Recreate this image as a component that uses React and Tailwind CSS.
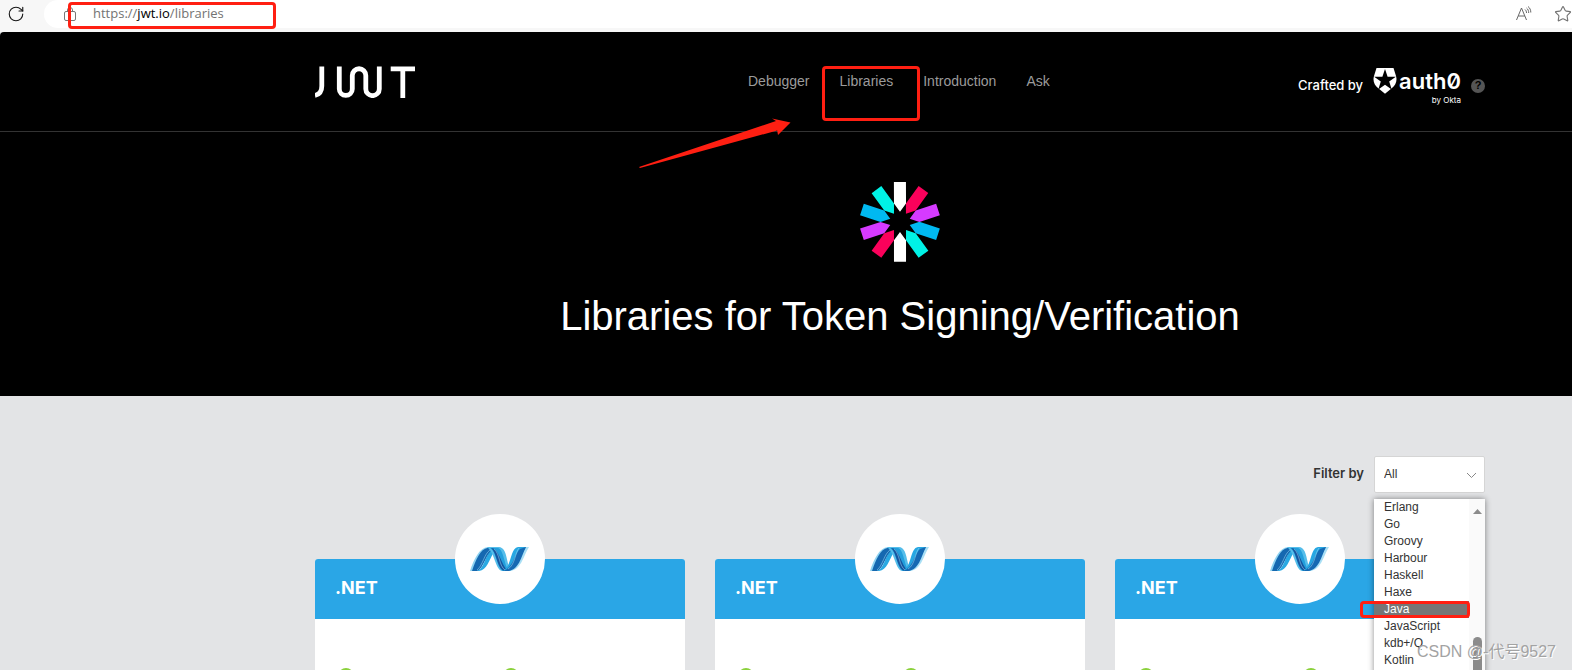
import { useState } from "react"
import { RotateCw, Star } from "lucide-react"
import { clsx } from "clsx"

const NAV_ITEMS = ["Debugger", "Libraries", "Introduction", "Ask"]

const LANGUAGES = [
  "Erlang",
  "Go",
  "Groovy",
  "Harbour",
  "Haskell",
  "Haxe",
  "Java",
  "JavaScript",
  "kdb+/Q",
  "Kotlin",
]

const LIBRARIES = [
  { id: 1, name: ".NET" },
  { id: 2, name: ".NET" },
  { id: 3, name: ".NET" },
]

function Wordmark() {
  return (
    <svg width="100" height="32" viewBox="0 0 100 32" fill="none" stroke="#fff" strokeWidth="4.8" aria-label="JWT">
      <path d="M6.800 .5V20c0 6-2.400 8.500-6.800 9.400" />
      <path d="M24.300 .5V22.900a6.500 6.500 0 0 0 13 0V9.500a6.700 6.700 0 0 1 13.500 0V22.900a6.700 6.700 0 0 0 13.500 0V.5" />
      <path d="M75.700 2.900H100M87.800 2.900V32" />
    </svg>
  )
}

function TokenMark() {
  return (
    <svg width="80" height="80" viewBox="-.3 0 101 101" aria-hidden="true">
      <path fill="#fff" d="M57.800 27.200L57.700 0H42.500l.1 27.200 7.600 10.400zM42.600 73.600v27.200h15.200V73.600l-7.600-10.400z" />
      <path fill="#00f2e6" d="M57.800 73.600l15.900 22L86 86.700 70 64.700l-12.200-4zM42.600 27.200L26.600 5.200 14.400 14.100l15.900 22 12.300 4z" />
      <path fill="#00b9f1" d="M30.300 36L4.500 27.600-.2 42l25.800 8.400 12.300-4zM62.500 54.300l7.500 10.400 25.800 8.400 4.700-14.400-25.800-8.400z" />
      <path fill="#d63aff" d="M74.700 50.400l25.800-8.400-4.700-14.400L70 36l-7.500 10.400zM25.600 50.400L-.2 58.800l4.700 14.400L30.300 64.700l7.600-10.400z" />
      <path fill="#fb015b" d="M30.300 64.700l-15.900 22 12.200 8.900 16-22v-12.900zM70 36l15.900-22-12.200-8.900-16 22v12.900z" />
    </svg>
  )
}

function Auth0Shield() {
  return (
    <svg width="24" height="26" viewBox="0 0 24 26" aria-hidden="true">
      <path fill="#fff" d="M3.500 0h17L23 8c1.500 5-.5 9.500-4 12l-7 5.700L5 20C1.500 17.500-.5 13 1 8z" />
      <path fill="#000" d="M12 1l2.600 7.800h8.200l-6.600 4.800 2.500 7.900L12 16.700l-6.700 4.800 2.500-7.900-6.600-4.800h8.200z" />
    </svg>
  )
}

function DotNetLogo() {
  return (
    <svg width="60" height="24" viewBox="0 0 60 24" aria-hidden="true">
      <path fill="#8fd3f1" d="M0 24C4 12 9 1 18 0h4C14 5 16 21 6 24z" />
      <path fill="#29a9e2" d="M6 24c8-1 9-15 15-21l3 2C19 13 17 23 9 24z" />
      <path fill="#1568b0" d="M2 24C6 13 10 2 18 .8l5 1.200C15 8 14 21 7 24z" />
      <path fill="#55bdea" d="M17 0h12c9 1 7 17 12 24H32C25 22 25 6 17 0z" />
      <path fill="#239fdc" d="M20 1h8c6 2 6 17 11 23h-6C26 20 27 5 20 1z" />
      <path fill="#15559f" d="M21 1c7 0 10 14 15 21l2 2h-4C27 21 27 6 21 1z" />
      <path fill="#a9dff5" d="M54 0h5C53 10 51 23 40 24h-4C46 20 48 8 54 0z" />
      <path fill="#27a7e2" d="M48 0h8C50 9 48 23 37 24h-4C42 19 40 1 48 0z" />
      <path fill="#1669b3" d="M50 2l6-2C51 10 49 23 38 24h-5C43 21 44 8 50 2z" />
      <path fill="none" stroke="#a4def5" strokeWidth=".5" d="M7 23C13 18 14 7 20 3M24 2c6 5 5 17 11 21M38 22C45 18 45 6 49 1" />
    </svg>
  )
}

function BrowserBar() {
  return (
    <div className="flex h-8 shrink-0 items-start bg-[#f7f7f7]">
      <button type="button" aria-label="Refresh" className="flex h-7 w-11 items-center pl-[7px]">
        <RotateCw className="h-[18px] w-[18px] text-neutral-900" strokeWidth={1.5} />
      </button>
      <div className="relative flex h-7 flex-1 items-center rounded-l-full bg-white pl-5">
        <svg width="12" height="14" viewBox="0 0 12 14" fill="none" stroke="#777" aria-hidden="true">
          <rect x=".5" y="4.500" width="11" height="9" rx="1.500" />
          <path d="M3.500 4.500V3a2.500 2.500 0 0 1 5 0v1.500" />
        </svg>
        <a href="#libraries" className="ml-[17px] font-['Open_Sans',sans-serif] text-[13px] text-neutral-500">
          https://<span className="text-black">jwt.io</span>/libraries
        </a>
        <div className="absolute top-0.5 left-6 h-[27px] w-[208px] rounded-sm border-3 border-[#ff1f12]" />
        <div className="ml-auto flex items-center gap-[22px]">
          <button type="button" aria-label="Read aloud" className="h-4 w-4">
            <svg width="16" height="16" viewBox="0 0 16 16" fill="none" stroke="#666" aria-hidden="true">
              <path d="M.5 14L5.500 2l5 12M2.300 10h6.500M9 3.500c1 .8 1.500 2 1.500 3.500M10.500 2c1.600 1.200 2.200 3 2.200 5M12 .5c2 1.500 2.800 3.500 2.800 6" />
            </svg>
          </button>
          <button type="button" aria-label="Favourite">
            <Star className="h-[18px] w-[18px] text-neutral-500" strokeWidth={1.5} />
          </button>
        </div>
      </div>
    </div>
  )
}

function Header() {
  return (
    <header className="relative border-b border-[#333]">
      <div className="mr-[87px] ml-[315px] flex h-[99px] items-center">
        <a href="#home">
          <Wordmark />
        </a>
        <nav className="ml-[333px] flex gap-[30px] pb-0.5 text-sm text-[#9b9b9b]">
          {NAV_ITEMS.map((item) => (
            <a key={item} href={`#${item.toLowerCase()}`} className="relative">
              {item}
              {item === "Libraries" && (
                <span className="absolute -top-[5px] -left-[18px] h-[55px] w-[98px] rounded-sm border-3 border-[#ff1f12]" />
              )}
            </a>
          ))}
        </nav>
        <div className="ml-auto flex items-center pt-2 text-white">
          <span className="font-[Inter,sans-serif] text-[13px] font-medium">Crafted by</span>
          <a href="#auth0" className="ml-2.5 flex flex-col items-end">
            <span className="flex items-center gap-0.5">
              <Auth0Shield />
              <span className="font-[Inter,sans-serif] text-[22px] leading-[28px] font-semibold [font-feature-settings:'zero']">
                auth0
              </span>
            </span>
            <span className="font-[Inter,sans-serif] text-[8px] leading-[10px]">by Okta</span>
          </a>
          <button
            type="button"
            aria-label="Help"
            className="ml-2.5 flex h-3.5 w-3.5 items-center justify-center rounded-full bg-[#555] text-[11px] font-bold text-black"
          >
            ?
          </button>
        </div>
      </div>
      <svg className="absolute top-[86px] left-[638px]" width="154" height="52" viewBox="0 0 154 52" aria-hidden="true">
        <path fill="#ff1f12" d="M1 49L138 3l-4-2.500 18.500 4L140 17l-.8-4.500L2 50z" />
      </svg>
    </header>
  )
}

function LanguageFilter() {
  const [selected, setSelected] = useState("Java")

  return (
    <div className="flex items-center justify-end gap-2.5">
      <label htmlFor="language" className="pb-0.5 font-[Inter,sans-serif] text-[13px] font-semibold text-[#333]">
        Filter by
      </label>
      <div className="relative w-[111px]">
        <select
          id="language"
          className="block h-[37px] w-full appearance-none rounded-xs border border-[#d5d5d5] bg-white px-[9px] pb-0.5 text-xs text-[#333]"
        >
          <option>All</option>
        </select>
        <svg className="pointer-events-none absolute top-4 right-2" width="11" height="7" viewBox="0 0 11 7" fill="none" stroke="#888" aria-hidden="true">
          <path d="M1 1l4.500 4.500L10 1" />
        </svg>

        {/* Open language list */}
        <div className="absolute top-[43px] left-0 z-20 flex h-[400px] w-full bg-white shadow-[0_0_6px_rgba(0,0,0,0.45)]">
          <ul className="flex-1">
            {LANGUAGES.map((language) => (
              <li key={language}>
                <button
                  type="button"
                  onClick={() => setSelected(language)}
                  className={clsx(
                    "block h-[17px] w-full px-2.5 text-left text-xs leading-[17px]",
                    language === selected ? "bg-[#767676] text-white" : "text-[#333]"
                  )}
                >
                  {language}
                </button>
              </li>
            ))}
          </ul>
          <div className="flex w-4 flex-col items-center bg-[#fafafa] pt-2.5">
            <svg width="9" height="5" viewBox="0 0 9 5" fill="#8b8b8b" aria-hidden="true">
              <path d="M4.500 0L9 5H0z" />
            </svg>
            <div className="mt-[123px] w-[9px] flex-1 rounded-full bg-[#8b8b8b]" />
          </div>
          <div className="absolute top-[102px] -left-3.5 h-[17px] w-[110px] rounded-sm border-3 border-[#ff1f12]" />
        </div>
      </div>
    </div>
  )
}

function LibraryCard({ name }) {
  return (
    <article className="relative rounded-t-[3px] bg-white">
      <h2 className="flex h-[60px] items-center rounded-t-[3px] bg-[#2aa6e6] px-5 pb-0.5 font-[Inter,sans-serif] text-lg font-bold text-white">
        {name}
      </h2>
      <div className="absolute -top-[45px] left-1/2 flex h-[90px] w-[90px] -translate-x-1/2 items-center justify-center rounded-full bg-white">
        <DotNetLogo />
      </div>
      <div className="grid h-[200px] grid-cols-2 pt-[49px] pr-[17px] pl-[23px]">
        <span className="h-4 w-4 rounded-full border-2 border-[#8bd13c]" />
        <span className="h-4 w-4 rounded-full border-2 border-[#8bd13c]" />
      </div>
    </article>
  )
}

export default function App() {
  return (
    <div className="relative flex h-screen flex-col overflow-hidden bg-[#e3e4e6] font-['Liberation_Sans','Noto_Sans_CJK_SC',sans-serif]">
      <BrowserBar />
      <div className="shrink-0 rounded-tl-sm bg-black">
        <Header />
        <div className="mr-[87px] ml-[315px] flex flex-col items-center pt-[50px] pb-[50px]">
          <TokenMark />
          <h1 className="mt-6 text-[40px] leading-[60px] text-white">Libraries for Token Signing/Verification</h1>
        </div>
      </div>
      <main className="mr-[87px] ml-[315px] pt-[60px]">
        <LanguageFilter />
        <div className="mt-[66px] grid grid-cols-3 gap-[30px]">
          {LIBRARIES.map((library) => (
            <LibraryCard key={library.id} name={library.name} />
          ))}
        </div>
      </main>
      <p className="absolute right-4 bottom-1.5 z-30 text-base text-[#a3a3a3] [text-shadow:1px_1px_0_#fff]">CSDN @-代号9527</p>
    </div>
  )
}
